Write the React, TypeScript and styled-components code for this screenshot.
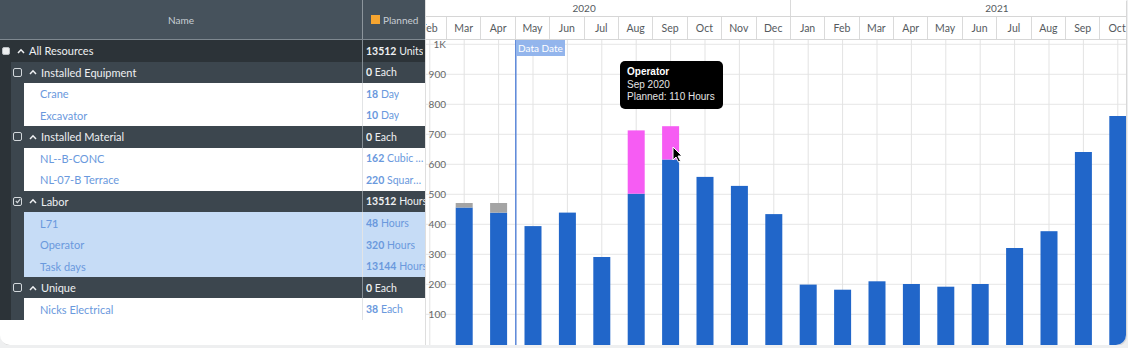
import * as React from 'react';
import styled, { createGlobalStyle } from 'styled-components';

const GlobalStyle = createGlobalStyle`
    html, body {
        margin: 0;
        padding: 0;
        background: #eeeff0;
    }
    body {
        font-family: Lato, "Liberation Sans", sans-serif;
    }
`;

// layout numbers for the timeline (chart is scrolled so Jan 2020 sits left of the view)
const MONTH_W = 34.4;
const SCROLL = -47.8;
const PLOT_H = 305;
const yOf = (v: number) => 304.3 - v * 0.3;
const centerOf = (m: number) => SCROLL + MONTH_W * m + MONTH_W / 2;

const MONTHS = ['Jan', 'Feb', 'Mar', 'Apr', 'May', 'Jun', 'Jul', 'Aug', 'Sep', 'Oct', 'Nov', 'Dec'];

interface Bar {
    m: number;
    blue: number;
    extra?: number;
    extraColor?: string;
}

const bars: Bar[] = [
    { m: 2, blue: 456, extra: 15, extraColor: '#a4a4a4' },
    { m: 3, blue: 439, extra: 32, extraColor: '#a4a4a4' },
    { m: 4, blue: 394 },
    { m: 5, blue: 439 },
    { m: 6, blue: 291 },
    { m: 7, blue: 502, extra: 211, extraColor: '#f65cf3' },
    { m: 8, blue: 616, extra: 111, extraColor: '#f65cf3' },
    { m: 9, blue: 558 },
    { m: 10, blue: 528 },
    { m: 11, blue: 434 },
    { m: 12, blue: 199 },
    { m: 13, blue: 182 },
    { m: 14, blue: 210 },
    { m: 15, blue: 201 },
    { m: 16, blue: 192 },
    { m: 17, blue: 201 },
    { m: 18, blue: 321 },
    { m: 19, blue: 377 },
    { m: 20, blue: 641 },
    { m: 21, blue: 761 },
];

interface Leaf {
    name: string;
    num: string;
    unit: string;
}

interface Group {
    name: string;
    num: string;
    unit: string;
    checked?: boolean;
    selected?: boolean;
    items: Leaf[];
}

const groups: Group[] = [
    {
        name: 'Installed Equipment', num: '0', unit: 'Each',
        items: [
            { name: 'Crane', num: '18', unit: 'Day' },
            { name: 'Excavator', num: '10', unit: 'Day' },
        ],
    },
    {
        name: 'Installed Material', num: '0', unit: 'Each',
        items: [
            { name: 'NL--B-CONC', num: '162', unit: 'Cubic Yards' },
            { name: 'NL-07-B Terrace', num: '220', unit: 'Square Feet' },
        ],
    },
    {
        name: 'Labor', num: '13512', unit: 'Hours', checked: true, selected: true,
        items: [
            { name: 'L71', num: '48', unit: 'Hours' },
            { name: 'Operator', num: '320', unit: 'Hours' },
            { name: 'Task days', num: '13144', unit: 'Hours' },
        ],
    },
    {
        name: 'Unique', num: '0', unit: 'Each',
        items: [{ name: 'Nicks Electrical', num: '38', unit: 'Each' }],
    },
];

type Tone = 'root' | 'group' | 'leaf' | 'selected';

const toneBg: Record<Tone, string> = {
    root: '#2c3338',
    group: '#3c464e',
    leaf: '#ffffff',
    selected: '#c6dcf6',
};

const Card = styled.div`
    width: 1126px;
    height: 345px;
    background: #fff;
    display: flex;
    overflow: hidden;
    border-radius: 0 0 10px 10px;
    box-shadow: 1px 1px 0 #d8d8d8;
`;

const Table = styled.div`
    width: 426px;
    flex: none;
    display: flex;
    flex-direction: column;
    box-sizing: border-box;
    border-right: 1px solid #dedede;
`;

const HeaderRow = styled.div`
    height: 40px;
    flex: none;
    display: flex;
    background: #46525c;
    color: #c8cfd5;
    font-size: 10px;
    box-sizing: border-box;
    border-bottom: 1px solid #7e8890;
`;

const NameHead = styled.div`
    flex: 1;
    display: flex;
    align-items: center;
    justify-content: center;
`;

const PlannedHead = styled.div`
    width: 63px;
    box-sizing: border-box;
    border-left: 1px solid #8c959c;
    display: flex;
    align-items: center;
    padding-left: 8px;
    gap: 3px;
`;

const Swatch = styled.span`
    width: 9px;
    height: 9px;
    background: #f6a530;
    display: inline-block;
`;

const Block = styled.div<{ $tone: Tone }>`
    background: ${p => toneBg[p.$tone]};
`;

const Nest = styled.div<{ $inset: number }>`
    padding-left: ${p => p.$inset}px;
`;

const Row = styled.div<{ $tone: Tone }>`
    height: 21.54px;
    display: flex;
    align-items: center;
    font-size: 11px;
    background: ${p => toneBg[p.$tone]};
    color: ${p => (p.$tone === 'root' || p.$tone === 'group' ? '#eef0f2' : '#6a99dd')};
`;

const NameCell = styled.div<{ $leaf?: boolean }>`
    flex: 1;
    min-width: 0;
    display: flex;
    align-items: center;
    padding-left: ${p => (p.$leaf ? 16 : 2)}px;
    white-space: nowrap;
`;

const ValueCell = styled.div<{ $light?: boolean }>`
    width: 63px;
    height: 100%;
    box-sizing: border-box;
    border-left: 1px solid ${p => (p.$light ? '#e2e4e6' : '#848d94')};
    padding-left: 3px;
    display: flex;
    align-items: center;
    white-space: nowrap;
    overflow: hidden;
    font-size: 10.5px;

    & b {
        font-weight: 700;
    }
`;

const Amount = styled.span<{ $ellipsis?: boolean }>`
    overflow: hidden;
    white-space: nowrap;
    text-overflow: ${p => (p.$ellipsis ? 'ellipsis' : 'clip')};
`;

const Check = styled.span<{ $filled?: boolean }>`
    width: ${p => (p.$filled ? 8 : 9)}px;
    height: ${p => (p.$filled ? 8 : 9)}px;
    box-sizing: border-box;
    border-radius: 2px;
    border: ${p => (p.$filled ? '1px solid #b9bec2' : '1.5px solid #d3d8dc')};
    background: ${p => (p.$filled ? '#eceeef' : 'transparent')};
    margin-right: 7px;
    display: inline-flex;
    align-items: center;
    justify-content: center;
    flex: none;
`;

const Caret = () => (
    <svg width="8" height="6" viewBox="0 0 8 6" style={{ marginRight: 4, flex: 'none' }}>
        <polyline points="1,5 4,1.8 7,5" fill="none" stroke="#eef0f2" strokeWidth="1.5" />
    </svg>
);

const Tick = () => (
    <svg width="6" height="6" viewBox="0 0 6 6">
        <polyline points="0.8,3 2.4,4.6 5.2,1.2" fill="none" stroke="#d3d8dc" strokeWidth="1.2" />
    </svg>
);

const Chart = styled.div`
    flex: 1;
    min-width: 0;
    display: flex;
    flex-direction: column;
    overflow: hidden;
`;

const Timeline = styled.div`
    flex: none;
    width: ${MONTH_W * 24}px;
    margin-left: ${SCROLL}px;
    display: flex;
    flex-direction: column;
    color: #555a5e;
`;

const Strip = styled.div<{ $h: number }>`
    height: ${p => p.$h}px;
    display: flex;
    box-sizing: border-box;
    border-bottom: 1px solid #d6d6d6;
`;

const Cell = styled.div<{ $w: number; $size: number }>`
    width: ${p => p.$w}px;
    flex: none;
    box-sizing: border-box;
    border-right: 1px solid #dadada;
    display: flex;
    align-items: center;
    justify-content: center;
    font-size: ${p => p.$size}px;
`;

const Plot = styled.div`
    flex: 1;
    position: relative;
`;

const DataDate = styled.div`
    position: absolute;
    left: 90px;
    top: 0;
    height: 16px;
    padding: 0 2px;
    display: flex;
    align-items: center;
    background: #93b5ec;
    color: #fff;
    font-size: 10px;
`;

const Tooltip = styled.div`
    position: absolute;
    left: 194px;
    top: 21px;
    width: 103px;
    box-sizing: border-box;
    padding: 5px 7px;
    border-radius: 5px;
    background: #000;
    color: #e4e4e4;
    font-family: "Liberation Sans", Arial, sans-serif;
    font-size: 10px;
    line-height: 12.5px;

    & > strong {
        display: block;
        color: #fff;
    }
`;

const Pointer = styled.svg`
    position: absolute;
    left: 246px;
    top: 106px;
`;

const amount = (num: string, unit: string) => (
    <Amount $ellipsis={unit.length > 6}><b>{num}</b> {unit}</Amount>
);

const TableTree = () => (
    <Block $tone="root">
        <Row $tone="root">
            <NameCell>
                <Check $filled />
                <Caret />
                All Resources
            </NameCell>
            <ValueCell>{amount('13512', 'Units')}</ValueCell>
        </Row>
        <Nest $inset={11}>
            {groups.map(g => (
                <Block key={g.name} $tone="group">
                    <Row $tone="group">
                        <NameCell>
                            <Check>{g.checked && <Tick />}</Check>
                            <Caret />
                            {g.name}
                        </NameCell>
                        <ValueCell>{amount(g.num, g.unit)}</ValueCell>
                    </Row>
                    <Nest $inset={13}>
                        {g.items.map(it => (
                            <Row key={it.name} $tone={g.selected ? 'selected' : 'leaf'}>
                                <NameCell $leaf>{it.name}</NameCell>
                                <ValueCell $light>{amount(it.num, it.unit)}</ValueCell>
                            </Row>
                        ))}
                    </Nest>
                </Block>
            ))}
        </Nest>
    </Block>
);

const ChartSvg = () => {
    const lines = [100, 200, 300, 400, 500, 600, 700, 800, 900, 1000];
    const months = Array.from({ length: 23 }, (_, i) => i + 1);
    return (
        <svg width="700" height={PLOT_H} style={{ display: 'block' }}>
            {lines.map(v => (
                <line key={v} x1="0" x2="700" y1={yOf(v)} y2={yOf(v)} stroke="#e6e6e6" strokeWidth="1" />
            ))}
            {months.map(m => (
                <line key={m} x1={centerOf(m)} x2={centerOf(m)} y1="0" y2={PLOT_H} stroke="#e3e3e3" strokeWidth="1" />
            ))}
            {bars.map(b => {
                const x = centerOf(b.m) - 8.5;
                const top = yOf(b.blue);
                return (
                    <g key={b.m}>
                        <rect x={x} y={top} width="17" height={PLOT_H - top} fill="#2166c9" />
                        {b.extra && (
                            <rect x={x} y={yOf(b.blue + b.extra)} width="17" height={top - yOf(b.blue + b.extra)} fill={b.extraColor} />
                        )}
                    </g>
                );
            })}
            <line x1="89.8" x2="89.8" y1="0" y2={PLOT_H} stroke="#5b87d8" strokeWidth="1.5" />
            {lines.map(v => (
                <text key={v} x="20" y={yOf(v) + 3.5} textAnchor="end" fontSize="10" fill="#666"
                    fontFamily="Lato, 'Liberation Sans', sans-serif">
                    {v === 1000 ? '1K' : v}
                </text>
            ))}
        </svg>
    );
};

const App = () => (
    <>
        <GlobalStyle />
        <Card>
            <Table>
                <HeaderRow>
                    <NameHead>Name</NameHead>
                    <PlannedHead><Swatch />Planned</PlannedHead>
                </HeaderRow>
                <TableTree />
            </Table>
            <Chart>
                <Timeline>
                    <Strip $h={17}>
                        <Cell $w={MONTH_W * 12} $size={10}>2020</Cell>
                        <Cell $w={MONTH_W * 12} $size={10}>2021</Cell>
                    </Strip>
                    <Strip $h={23}>
                        {[...MONTHS, ...MONTHS].map((m, i) => (
                            <Cell key={i} $w={MONTH_W} $size={10.5}>{m}</Cell>
                        ))}
                    </Strip>
                </Timeline>
                <Plot>
                    <ChartSvg />
                    <DataDate>Data Date</DataDate>
                    <Tooltip>
                        <strong>Operator</strong>
                        Sep 2020<br />
                        Planned: 110 Hours
                    </Tooltip>
                    <Pointer width="11" height="17" viewBox="0 0 11 17">
                        <path d="M1 1 L1 14 L4 11 L6.5 16 L8.5 15 L6 10 L10 10 Z" fill="#000" stroke="#fff" strokeWidth="1" />
                    </Pointer>
                </Plot>
            </Chart>
        </Card>
    </>
);

export default App;
